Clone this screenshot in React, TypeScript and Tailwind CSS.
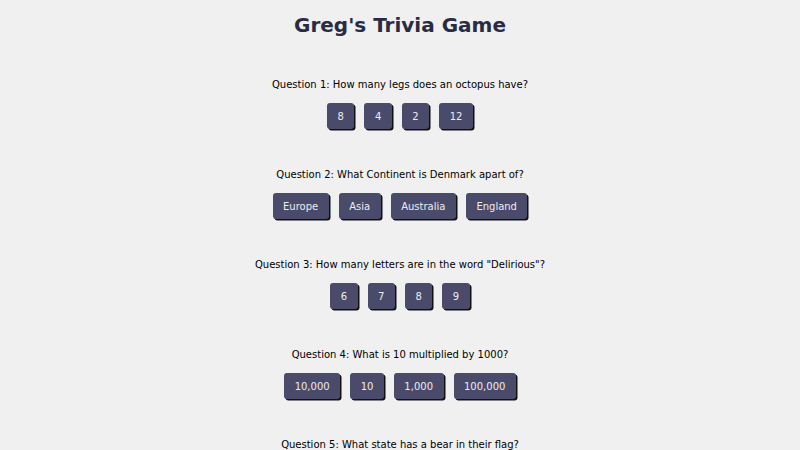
const questions = [
  { text: "Question 1: How many legs does an octopus have?", answers: ["8", "4", "2", "12"] },
  { text: "Question 2: What Continent is Denmark apart of?", answers: ["Europe", "Asia", "Australia", "England"] },
  { text: 'Question 3: How many letters are in the word "Delirious"?', answers: ["6", "7", "8", "9"] },
  { text: "Question 4: What is 10 multiplied by 1000?", answers: ["10,000", "10", "1,000", "100,000"] },
  { text: "Question 5: What state has a bear in their flag?", answers: ["Alaska", "California", "Montana", "Texas"] },
];

export default function App() {
  return (
    <div
      className="h-screen overflow-hidden bg-[#f0f0f0] text-black flex flex-col items-center"
      style={{ fontFamily: '"DejaVu Sans", sans-serif' }}
    >
      <h1 className="pt-[13px] text-[20px] leading-[24px] font-bold text-[#2a2b42]">
        Greg's Trivia Game
      </h1>

      <div className="mt-[40px] flex flex-col items-center">
        {questions.map((q) => (
          <div key={q.text} className="flex flex-col items-center h-[90px] shrink-0">
            <p className="text-[10px] leading-[16px]">{q.text}</p>
            <div className="mt-[10px] flex gap-[10px]">
              {q.answers.map((a) => (
                <button
                  key={a}
                  className="h-[26px] px-[10.5px] rounded-[3px] bg-[#4a4b6a] text-[#ececf2] text-[10px] shadow-[1.5px_1.5px_0_#111]"
                >
                  {a}
                </button>
              ))}
            </div>
          </div>
        ))}
      </div>
    </div>
  );
}
